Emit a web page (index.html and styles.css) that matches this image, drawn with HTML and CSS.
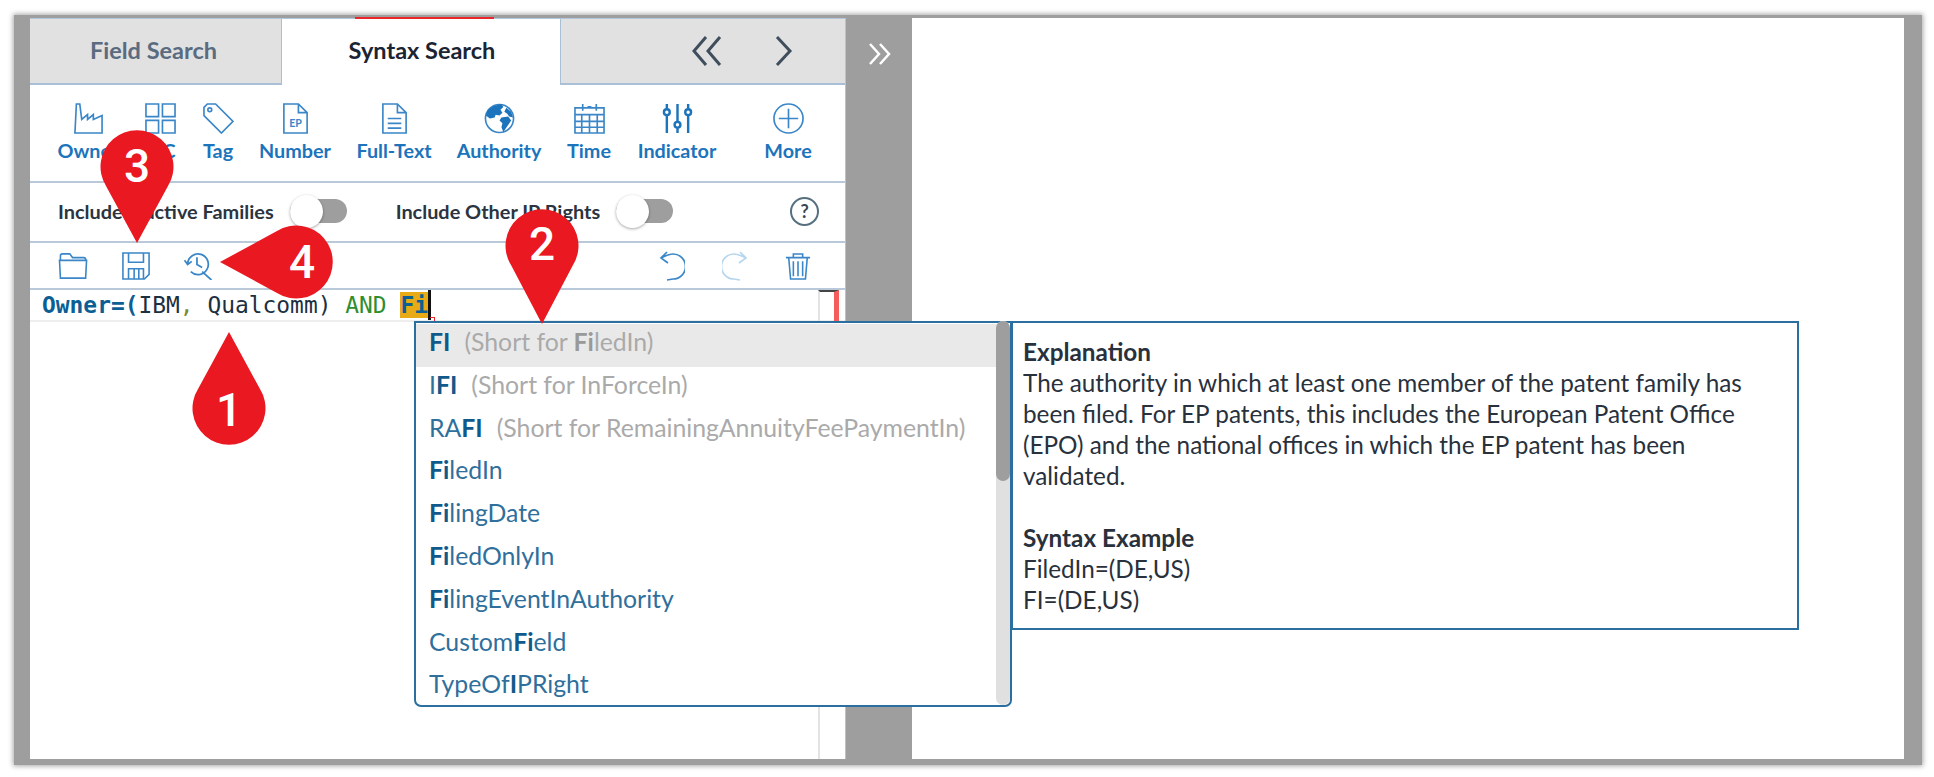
FILE: index.html
```html
<!DOCTYPE html>
<html lang="en">
<head>
    <meta charset="UTF-8">
    <title>Syntax Search</title>
    <link rel="stylesheet" href="styles.css">
</head>
<body>
    <div class="frame">
        <div class="panel">
            <div class="tabs">
                <div class="tab tab-field">Field Search</div>
                <div class="tab tab-active">Syntax Search</div>
                <div class="tab-nav">
                    <svg class="nav-first" width="30" height="32" viewBox="0 0 30 32"><path d="M14 2 2 16l12 14M28 2 16 16l12 14"/></svg>
                    <svg class="nav-next" width="18" height="32" viewBox="0 0 18 32"><path d="M2 2l13 14L2 30"/></svg>
                </div>
            </div>

            <div class="fields">
                <div class="field">
                    <svg class="ico" viewBox="0 0 32 32"><path d="M2 31 3.500 1H7l2 16 6-5v5l6-5v5l9-4v18z"/></svg>
                    <span>Owner</span>
                </div>
                <div class="field">
                    <svg class="ico" viewBox="0 0 32 32"><path d="M1 1h13v13H1zM18 1h13v13H18zM1 18h13v13H1zM18 18h13v13H18z"/></svg>
                    <span>IPC</span>
                </div>
                <div class="field">
                    <svg class="ico" viewBox="0 0 32 32"><path d="M1 4.500 4.500 1H13l18 18-12 12L1 13z"/><circle cx="7" cy="7" r="2"/></svg>
                    <span>Tag</span>
                </div>
                <div class="field">
                    <svg class="ico" viewBox="0 0 32 32"><path d="M4 1h15l9 9v21H4zM19 1v9h9"/><text class="ep" x="16" y="25">EP</text></svg>
                    <span>Number</span>
                </div>
                <div class="field">
                    <svg class="ico" viewBox="0 0 32 32"><path d="M4 1h15l9 9v21H4zM19 1v9h9M9 16h14M9 21h14M9 26h14"/></svg>
                    <span>Full-Text</span>
                </div>
                <div class="field">
                    <svg class="ico" viewBox="0 0 32 32"><circle cx="16" cy="16" r="14.500"/><path class="fill" d="M10 3l8-2 2 3-3 3 2 3-3 3-4-1-1 3-5 1-4-3 2-6zM18 15l7-1 3 4-4 6-4 6-2-5 1-4-3-3zM23 5l5 4 2 6-4-1-2-3-3-2z"/></svg>
                    <span>Authority</span>
                </div>
                <div class="field">
                    <svg class="ico" viewBox="0 0 32 32"><path d="M1 5h30v26H1zM1 12h30M1 19h30M1 25h30M8 12v19M16 12v19M24 12v19M9 1v7M23 1v7M14 4h4"/></svg>
                    <span>Time</span>
                </div>
                <div class="field">
                    <svg class="ico ico-bold" viewBox="0 0 32 32"><path d="M5 1v5M5 13v18M16 1v18M16 26v5M27 1v5M27 13v18"/><circle cx="5" cy="9.500" r="3"/><circle cx="16" cy="22.500" r="3"/><circle cx="27" cy="9.500" r="3"/></svg>
                    <span>Indicator</span>
                </div>
                <div class="field">
                    <svg class="ico" viewBox="0 0 32 32"><circle cx="16" cy="16" r="15"/><path d="M16 6v20M6 16h20"/></svg>
                    <span>More</span>
                </div>
            </div>

            <div class="filters">
                <span class="filter-label">Include Inactive Families</span>
                <span class="toggle"></span>
                <span class="filter-label filter-other">Include Other IP Rights</span>
                <span class="toggle"></span>
                <span class="help">?</span>
            </div>

            <div class="actions">
                <svg class="act act-open" viewBox="0 0 32 30"><path d="M2 28 1 9h29l-1 19zM2 9V4q0-2 2-2h8l3 4h12q2 0 2 2v1"/></svg>
                <svg class="act act-save" viewBox="0 0 30 30"><path d="M1 1h28v23l-5 5H1zM7 1v10h16V1M7 29V18h16v11M13 18v11M18 18v11"/></svg>
                <svg class="act act-history" viewBox="0 0 28 28"><path d="M4 12a10 10 0 1 1 3 8M1 9l3 4 4-3M13 6v7l5 3M18 20l9 8"/></svg>
                <span class="act-space"></span>
                <svg class="act act-edit" viewBox="0 0 26 30"><path d="M8 1 2 7l7 5M2 7c4-2 8-4 12-4a12.500 12.500 0 0 1 0 25l-6 1"/></svg>
                <svg class="act act-edit act-off" viewBox="0 0 26 30"><path d="M18 1l6 6-7 5M24 7c-4-2-8-4-12-4a12.500 12.500 0 0 0 0 25l6 1"/></svg>
                <svg class="act act-edit" viewBox="0 0 28 30"><path d="M1 6h26M9 6V2h10v4M4 6l2 23h16l2-23M9 10v16M14 10v16M19 10v16"/></svg>
            </div>

            <div class="editor">
                <div class="code-line"><span class="kw">Owner=(</span>IBM<span class="comma">,</span> Qualcomm) <span class="op">AND</span> <span class="match">Fi</span><span class="caret"></span></div>
                <div class="ruler"></div>
            </div>
            <div class="editor-rest"></div>
        </div>
        <div class="gutter">
            <svg width="24" height="24" viewBox="0 0 24 24"><path d="M2 2l9 10-9 10M12 2l9 10-9 10"/></svg>
        </div>
        <div class="results"></div>

        <ul class="suggest">
            <li class="on"><b>FI</b><span class="hint">(Short for <b>Fi</b>ledIn)</span></li>
            <li>I<b>FI</b><span class="hint">(Short for InForceIn)</span></li>
            <li>RA<b>FI</b><span class="hint">(Short for RemainingAnnuityFeePaymentIn)</span></li>
            <li><b>Fi</b>ledIn</li>
            <li><b>Fi</b>lingDate</li>
            <li><b>Fi</b>ledOnlyIn</li>
            <li><b>Fi</b>lingEventInAuthority</li>
            <li>Custom<b>Fi</b>eld</li>
            <li>TypeOf<b>I</b>PRight</li>
        </ul>
        <div class="scroll"><div class="thumb"></div></div>

        <div class="explain">
            <b>Explanation</b>
            <p>The authority in which at least one member of the patent family has been filed. For EP patents, this includes the European Patent Office (EPO) and the national offices in which the EP patent has been validated.</p>
            <b class="explain-sub">Syntax Example</b>
            <p>FiledIn=(DE,US)<br>FI=(DE,US)</p>
        </div>
    </div>

    <svg class="pin pin-1" width="74" height="114" viewBox="0 0 74 114"><path d="M37 0 6 57a36.500 36.500 0 1 0 62 0z"/><text x="37" y="94">1</text></svg>
    <svg class="pin pin-2" width="74" height="116" viewBox="0 0 74 116"><path d="M37 116 6 57a36.500 36.500 0 1 1 62 0z"/><text x="37" y="52">2</text></svg>
    <svg class="pin pin-3" width="74" height="114" viewBox="0 0 74 114"><path d="M37 114 6 57a36.500 36.500 0 1 1 62 0z"/><text x="37" y="53">3</text></svg>
    <svg class="pin pin-4" width="115" height="74" viewBox="0 0 115 74"><path d="M0 37 57 6a36.500 36.500 0 1 1 0 62z"/><text x="82" y="53">4</text></svg>
</body>
</html>
```

FILE: styles.css
```css
* { box-sizing: border-box; }
html, body { margin: 0; height: 100%; overflow: hidden; }
body { background: #fff; font-family: 'Lato', sans-serif; }

.frame { position: relative; display: flex; width: 1908px; height: 750px; margin: 15px 0 0 14px; border: solid #9e9e9e; border-width: 3px 18px 6px 16px; background: #fff; box-shadow: 0 0 5px 1px rgba(0,0,0,0.35); }
.panel { display: flex; flex-direction: column; width: 816px; border-right: 1px solid #b4c4d6; }
.gutter { width: 66px; padding: 24px 0 0 22px; background: #9e9e9e; }
.gutter svg path { fill: none; stroke: #fff; stroke-width: 2.500; }
.results { flex: 1; }

.tabs { display: flex; height: 67px; border-top: 1px solid #b4c6da; }
.tab { display: flex; align-items: center; justify-content: center; width: 252px; padding-bottom: 3px; background: #e1e1e1; color: #5a6b80; font-size: 23.500px; font-weight: 700; border-right: 1px solid #a9bfd6; border-bottom: 2px solid #a9bfd6; }
.tab-field { padding-right: 4px; }
.tab-active { position: relative; width: 279px; padding: 0 0 5px 2px; background: #fff; color: #1b2433; border-bottom: 0; }
.tab-active::before { content: ""; position: absolute; top: -2px; left: 73px; width: 139px; height: 2px; background: #e8262b; }
.tab-nav { flex: 1; display: flex; align-items: center; background: #e1e1e1; border-bottom: 2px solid #a9bfd6; }
.tab-nav svg { fill: none; stroke: #3f4d5c; stroke-width: 3; }
.nav-first { margin-left: 131px; }
.nav-next { margin-left: 53px; }

.fields { display: grid; grid-template-columns: 72px 72px 44px 110px 88px 122px 58px 118px 104px; height: 98px; padding: 18px 0 0 22px; border-bottom: 2px solid #b9c9da; }
.field { display: flex; flex-direction: column; align-items: center; color: #1c74bc; font-size: 19.800px; font-weight: 700; white-space: nowrap; }
.ico { width: 31px; height: 31px; margin-bottom: 4px; fill: none; stroke: #3a86c8; stroke-width: 1.700; }
.ico-bold { stroke: #1c74bc; stroke-width: 2.500; }
.ico .ep { fill: #3a86c8; stroke: none; font-size: 11px; text-anchor: middle; }
.ico .fill { fill: #1c74bc; stroke: none; }

.filters { display: flex; align-items: center; height: 60px; padding: 0 0 2px 28px; border-bottom: 2px solid #b9c9da; }
.filter-label { color: #2b3440; font-size: 19.900px; font-weight: 700; white-space: nowrap; }
.filter-other { margin-left: 49px; }
.toggle { position: relative; flex: none; width: 57px; height: 24px; margin-left: 16px; border-radius: 12px; background: #9e9e9e; }
.toggle::before { content: ""; position: absolute; top: -4px; left: 0; width: 33px; height: 33px; border-radius: 50%; background: #fff; box-shadow: 0 1px 3px rgba(0,0,0,0.35); }
.help { display: flex; align-items: center; justify-content: center; width: 29px; height: 29px; margin-left: 117px; border: 2px solid #56707f; border-radius: 50%; color: #3a4854; font-size: 18px; font-weight: 700; }

.actions { display: flex; align-items: center; height: 47px; padding: 0 34px 0 28px; border-bottom: 2px solid #b9c9da; }
.act { width: 28px; height: 28px; fill: none; stroke: #3a86c8; stroke-width: 1.700; }
.act + .act { margin-left: 33px; }
.act-open { width: 31px; }
.act-history { width: 30px; height: 29px; }
.act-edit { width: 26px; height: 30px; }
.act-off { stroke: #b5d6ee; }
.act-space { flex: 1; }
.act-space + .act { margin-left: 0; }
.act-edit + .act-edit { margin-left: 37px; }

.editor { position: relative; height: 32px; padding-left: 12px; border-bottom: 2px solid #eee; }
.code-line { height: 30px; color: #1d3040; font-family: 'DejaVu Sans Mono', monospace; font-size: 22.900px; line-height: 31px; white-space: pre; }
.kw { color: #0b5f94; font-weight: 700; }
.comma { color: #7a8a30; }
.op { color: #2f8f2f; }
.match { background: #e8ab16; color: #0b5f94; font-weight: 700; }
.caret { position: relative; display: inline-block; width: 3px; height: 30px; vertical-align: top; background: #111; }
.caret::after { content: ""; position: absolute; top: 27px; left: 2px; width: 4px; height: 4px; border-top: 1px solid #e8262b; border-right: 1px solid #e8262b; }
.ruler { position: absolute; top: 0; left: 788px; width: 21px; height: 31px; border-top: 2px solid #444; border-right: 5px solid #f55c5c; border-left: 2px solid #e3e3e3; }
.editor-rest { flex: 1; margin-left: 788px; border-left: 2px solid #e3e3e3; }

.suggest { position: absolute; top: 303px; left: 384px; width: 598px; height: 386px; margin: 0; padding: 1px 0 0; list-style: none; background: #fff; border: 2px solid #2a6f9f; border-radius: 0 0 7px 7px; color: #2f6f9c; font-size: 24.800px; }
.suggest li { height: 42.800px; padding-left: 13px; line-height: 36px; white-space: nowrap; }
.suggest b { color: #0f5a8a; }
.suggest .on { width: 584px; background: #e9e9e9; }
.hint { margin-left: 14px; color: #aaa; }
.hint b { color: #999; }
.scroll { position: absolute; top: 303px; left: 966px; width: 14px; height: 384px; border-radius: 7px; background: #e0e0e0; }
.thumb { height: 160px; border-radius: 7px; background: #9e9e9e; }

.explain { position: absolute; top: 303px; left: 981px; width: 788px; height: 309px; padding: 13px 10px 0; background: #fff; border: 2px solid #2a6f9f; color: #28313c; font-size: 24.300px; line-height: 31px; }
.explain p { margin: 0; }
.explain-sub { display: block; margin-top: 31px; }

.pin { position: absolute; }
.pin path { fill: #ea1821; }
.pin text { fill: #fff; font-family: 'Roboto', sans-serif; font-size: 46px; font-weight: 500; text-anchor: middle; }
.pin-1 { top: 332px; left: 192px; }
.pin-2 { top: 208px; left: 505px; }
.pin-3 { top: 129px; left: 100px; }
.pin-4 { top: 225px; left: 220px; }
```
